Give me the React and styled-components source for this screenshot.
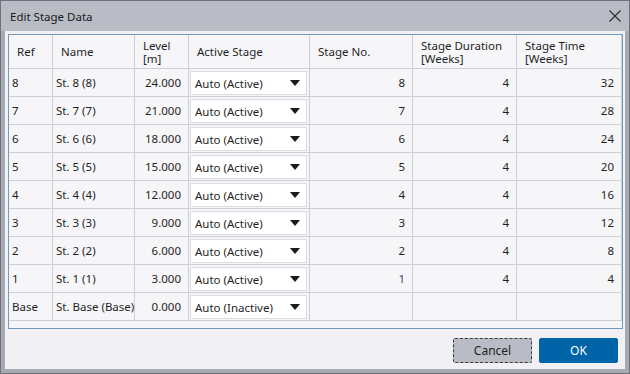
import React from 'react'
import styled, { createGlobalStyle } from 'styled-components'

const GlobalStyle = createGlobalStyle`
    html, body {
        margin: 0;
        padding: 0;
        background: #ffffff;
    }
    * {
        box-sizing: border-box;
    }
`;

const Window = styled.div`
    width: 630px;
    height: 374px;
    border: 1px solid #6f727a;
    background-color: #a7aab2;
    display: flex;
    flex-direction: column;
    font-family: "Noto Sans", "DejaVu Sans", sans-serif;
    font-size: 11.5px;
    color: #1f1f1f;
`;

const TitleBar = styled.div`
    height: 30px;
    flex: none;
    background-color: #b9bcc4;
    display: flex;
    align-items: center;
    justify-content: space-between;
    padding: 0 7px 0 9px;
`;

const Title = styled.span`
    font-size: 11.5px;
    color: #1a1a1a;
`;

const CloseButton = styled.div`
    width: 14px;
    height: 14px;
    display: flex;
    align-items: center;
    justify-content: center;
`;

const Content = styled.div`
    flex: 1;
    margin: 0 4px 4px 4px;
    background-color: #f0f0f5;
    padding: 3px 2px 0 3px;
    display: flex;
    flex-direction: column;
`;

const TableFrame = styled.div`
    width: 615px;
    height: 295px;
    border: 1px solid #7599bd;
    background-color: #f6f6f9;
`;

const Grid = styled.div`
    display: grid;
    grid-template-columns: 44px 82px 54px 121px 103px 104px 105px;
`;

const HeadCell = styled.div`
    height: 34px;
    border-right: 1px solid #cdced6;
    border-bottom: 1px solid #cdced6;
    padding: 0 4px 0 8px;
    display: flex;
    align-items: center;
    line-height: 13px;
    white-space: pre-line;
`;

const Cell = styled.div`
    height: 28px;
    border-right: 1px solid #cdced6;
    border-bottom: 1px solid #cdced6;
    padding: ${p => (p.$right ? '0 7px 0 3px' : '0 3px 0 3px')};
    display: flex;
    align-items: center;
    justify-content: ${p => (p.$right ? 'flex-end' : 'flex-start')};
    white-space: nowrap;
    color: ${p => p.$tint || '#1f1f1f'};
`;

const SelectCell = styled.div`
    height: 28px;
    border-right: 1px solid #cdced6;
    border-bottom: 1px solid #cdced6;
    padding: 2px 2px 1px 1px;
`;

const SelectBox = styled.div`
    height: 100%;
    background-color: #ffffff;
    border: 1px solid #dcdde3;
    display: flex;
    align-items: center;
    justify-content: space-between;
    padding: 0 6px 0 4px;
`;

const Arrow = styled.span`
    width: 0;
    height: 0;
    border-left: 5px solid transparent;
    border-right: 5px solid transparent;
    border-top: 6px solid #1a1a1a;
`;

const Footer = styled.div`
    display: flex;
    justify-content: flex-end;
    gap: 7px;
    padding: 9px 5px 0 0;
`;

const Button = styled.div`
    width: 79px;
    height: 25px;
    display: flex;
    align-items: center;
    justify-content: center;
    font-size: 12px;
    background-color: ${p => (p.$primary ? '#0064a8' : '#b9bcc4')};
    color: ${p => (p.$primary ? '#ffffff' : '#1f1f1f')};
    border: ${p => (p.$primary ? '1px solid #0064a8' : '1px dashed #3a3a3a')};
    border-radius: 2px;
`;

const headers = ['Ref', 'Name', 'Level\n[m]', 'Active Stage', 'Stage No.', 'Stage Duration\n[Weeks]', 'Stage Time\n[Weeks]'];

const rows = [
    { ref: '8', name: 'St. 8 (8)', level: '24.000', active: 'Auto (Active)', no: '8', dur: '4', time: '32' },
    { ref: '7', name: 'St. 7 (7)', level: '21.000', active: 'Auto (Active)', no: '7', dur: '4', time: '28' },
    { ref: '6', name: 'St. 6 (6)', level: '18.000', active: 'Auto (Active)', no: '6', dur: '4', time: '24' },
    { ref: '5', name: 'St. 5 (5)', level: '15.000', active: 'Auto (Active)', no: '5', dur: '4', time: '20' },
    { ref: '4', name: 'St. 4 (4)', level: '12.000', active: 'Auto (Active)', no: '4', dur: '4', time: '16' },
    { ref: '3', name: 'St. 3 (3)', level: '9.000', active: 'Auto (Active)', no: '3', dur: '4', time: '12' },
    { ref: '2', name: 'St. 2 (2)', level: '6.000', active: 'Auto (Active)', no: '2', dur: '4', time: '8' },
    { ref: '1', name: 'St. 1 (1)', level: '3.000', active: 'Auto (Active)', no: '1', dur: '4', time: '4' },
    { ref: 'Base', name: 'St. Base (Base)', level: '0.000', active: 'Auto (Inactive)', no: '', dur: '', time: '' },
];

function App() {
    return (
        <>
            <GlobalStyle />
            <Window>
                <TitleBar>
                    <Title>Edit Stage Data</Title>
                    <CloseButton>
                        <svg width="12" height="12" viewBox="0 0 12 12">
                            <path d="M0.5 0.5 L11.5 11.5 M11.5 0.5 L0.5 11.5" stroke="#2b2b2b" strokeWidth="1.1" fill="none" />
                        </svg>
                    </CloseButton>
                </TitleBar>
                <Content>
                    <TableFrame>
                        <Grid>
                            {headers.map(h => (
                                <HeadCell key={h}>{h}</HeadCell>
                            ))}
                            {rows.map(r => (
                                <React.Fragment key={r.ref}>
                                    <Cell>{r.ref}</Cell>
                                    <Cell>{r.name}</Cell>
                                    <Cell $right>{r.level}</Cell>
                                    <SelectCell>
                                        <SelectBox>
                                            <span>{r.active}</span>
                                            <Arrow />
                                        </SelectBox>
                                    </SelectCell>
                                    <Cell $right $tint={r.no === '1' ? '#4a3a8a' : undefined}>{r.no}</Cell>
                                    <Cell $right>{r.dur}</Cell>
                                    <Cell $right>{r.time}</Cell>
                                </React.Fragment>
                            ))}
                        </Grid>
                    </TableFrame>
                    <Footer>
                        <Button>Cancel</Button>
                        <Button $primary>OK</Button>
                    </Footer>
                </Content>
            </Window>
        </>
    )
}

export default App
